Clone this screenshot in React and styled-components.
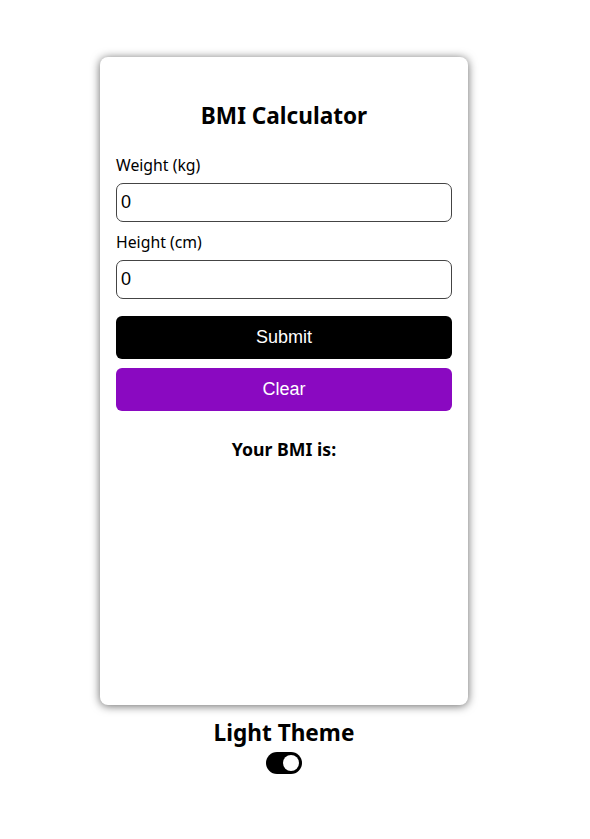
import React, { useState } from 'react'
import styled, { createGlobalStyle } from 'styled-components'

const GLOBAL = createGlobalStyle`
	body {
		margin: 0;
		background: #fff;
		font-family: "Noto Sans", "Open Sans", sans-serif;
	}
`

const PAGE = styled.main`
	width: 568px;
	display: flex;
	flex-direction: column;
	align-items: center;
	padding-top: 57px;
`

const CARD = styled.section`
	box-sizing: border-box;
	width: 368px;
	height: 648px;
	padding: 0 16px;
	background: #fff;
	border-radius: 8px;
	box-shadow: 0 1px 10px rgba(0, 0, 0, 0.6);
	display: flex;
	flex-direction: column;
`

const TITLE = styled.h2`
	margin: 44px 0 24px;
	font-size: 22.6px;
	line-height: 30px;
	text-align: center;
	color: #000;
`

const LABEL = styled.label`
	font-size: 15.8px;
	line-height: 20px;
	color: #000;
	margin-bottom: 8px;
`

const INPUT = styled.input`
	box-sizing: border-box;
	height: 39px;
	width: 100%;
	padding: 0 4px;
	border: 1px solid #444;
	border-radius: 7px;
	font-family: "Liberation Sans", Arial, sans-serif;
	font-size: 18px;
	color: #000;
	margin-bottom: 10px;
	outline: none;
`

const BUTTON = styled.button`
	box-sizing: border-box;
	width: 100%;
	height: 43px;
	border: none;
	border-radius: 6px;
	background: ${p => p.$tone};
	color: #fff;
	font-family: "Liberation Sans", Arial, sans-serif;
	font-size: 18px;
	margin-top: ${p => p.$gap}px;
	cursor: pointer;
`

const RESULT = styled.h3`
	margin: 27px 0 0;
	font-size: 17.7px;
	line-height: 22px;
	text-align: center;
	color: #000;
`

const THEME_LABEL = styled.h2`
	margin: 13px 0 4px;
	font-size: 22.6px;
	line-height: 30px;
	color: #000;
`

const SWITCH = styled.button`
	box-sizing: border-box;
	width: 36px;
	height: 22px;
	padding: 0 3px;
	border: none;
	border-radius: 11px;
	background: #000;
	display: flex;
	align-items: center;
	justify-content: ${p => (p.$on ? 'flex-end' : 'flex-start')};
	cursor: pointer;

	&::after {
		content: '';
		width: 16px;
		height: 16px;
		border-radius: 50%;
		background: #fff;
	}
`

const App = () => {
	const [weight, set_weight] = useState(0)
	const [height, set_height] = useState(0)
	const [light, set_light] = useState(true)

	return (
		<>
			<GLOBAL />
			<PAGE>
				<CARD>
					<TITLE children="BMI Calculator" />
					<LABEL children="Weight (kg)" />
					<INPUT value={weight} onChange={e => set_weight(e.target.value)} />
					<LABEL children="Height (cm)" />
					<INPUT value={height} onChange={e => set_height(e.target.value)} />
					<BUTTON $tone="#000" $gap={7} children="Submit" />
					<BUTTON
						$tone="#8a09c1"
						$gap={9}
						children="Clear"
						onClick={() => {
							set_weight(0)
							set_height(0)
						}}
					/>
					<RESULT children="Your BMI is:" />
				</CARD>
				<THEME_LABEL children="Light Theme" />
				<SWITCH $on={light} onClick={() => set_light(!light)} />
			</PAGE>
		</>
	)
}

export default App
